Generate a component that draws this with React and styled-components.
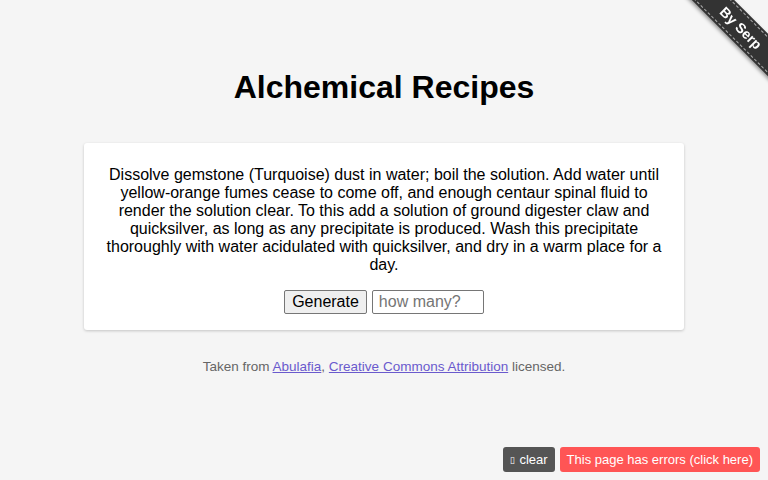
import React from 'react';
import styled, { createGlobalStyle } from 'styled-components';

const GlobalStyle = createGlobalStyle`
  html, body {
    margin: 0;
    padding: 0;
    background: #f5f5f5;
    font-family: "Liberation Sans", Arial, sans-serif;
    overflow: hidden;
  }
`;

const RECIPE =
  'Dissolve gemstone (Turquoise) dust in water; boil the solution. Add water until yellow-orange fumes cease to come off, and enough centaur spinal fluid to render the solution clear. To this add a solution of ground digester claw and quicksilver, as long as any precipitate is produced. Wash this precipitate thoroughly with water acidulated with quicksilver, and dry in a warm place for a day.';

const App = () => {
  return (
    <Page>
      <GlobalStyle />
      <Title>Alchemical Recipes</Title>
      <Card>
        <Recipe>{RECIPE}</Recipe>
        <Controls>
          <GenerateButton>Generate</GenerateButton>
          <CountInput placeholder="how many?" />
        </Controls>
      </Card>
      <Footer>
        Taken from <a href="#">Abulafia</a>,{' '}
        <a href="#">Creative Commons Attribution</a> licensed.
      </Footer>

      <RibbonCorner>
        <Ribbon>
          <RibbonText>By Serp</RibbonText>
        </Ribbon>
      </RibbonCorner>

      <ErrorBar>
        <BarButton $dark>
          <Tofu>{'\u25AF'}</Tofu> clear
        </BarButton>
        <BarButton>This page has errors (click here)</BarButton>
      </ErrorBar>
    </Page>
  );
};

const Page = styled.div`
  width: 768px;
  height: 480px;
  display: flex;
  flex-direction: column;
  align-items: center;
`;

const Title = styled.h1`
  margin: 67px 0 0;
  font-size: 32px;
  line-height: 40px;
  font-weight: bold;
  color: #000;
`;

const Card = styled.section`
  width: 600px;
  box-sizing: border-box;
  margin-top: 36px;
  padding: 23px 20px 16px;
  background: #fff;
  border-radius: 3px;
  box-shadow: 0 1px 3px rgba(0, 0, 0, 0.2);
  text-align: center;
`;

const Recipe = styled.p`
  margin: 0;
  font-size: 16px;
  line-height: 18px;
  color: #000;
`;

const Controls = styled.div`
  display: flex;
  justify-content: center;
  gap: 5px;
  margin-top: 16px;
`;

const GenerateButton = styled.button`
  height: 24px;
  padding: 0 7px;
  font-family: "Liberation Sans", Arial, sans-serif;
  font-size: 16px;
  color: #000;
  background: #efefef;
  border: 1px solid #767676;
  border-radius: 2px;
`;

const CountInput = styled.input`
  width: 112px;
  height: 24px;
  box-sizing: border-box;
  padding: 0 6px;
  font-family: "Liberation Sans", Arial, sans-serif;
  font-size: 16px;
  border: 1px solid #767676;
  border-radius: 2px;
  background: #fff;
  &::placeholder {
    color: #757575;
  }
`;

const Footer = styled.p`
  margin: 29px 0 0;
  font-size: 13.5px;
  color: #666;
  a {
    color: #6a5acd;
  }
`;

const RibbonCorner = styled.div`
  position: fixed;
  top: 0;
  right: 0;
  width: 160px;
  height: 160px;
  overflow: hidden;
  pointer-events: none;
`;

const Ribbon = styled.div`
  position: absolute;
  top: 13px;
  right: -73px;
  width: 200px;
  height: 30px;
  box-sizing: border-box;
  padding: 2px 0;
  transform: rotate(45deg);
  background: #333;
  box-shadow: 0 2px 4px rgba(0, 0, 0, 0.4);
`;

const RibbonText = styled.div`
  height: 26px;
  box-sizing: border-box;
  border-top: 1px dashed rgba(255, 255, 255, 0.6);
  border-bottom: 1px dashed rgba(255, 255, 255, 0.6);
  color: #fff;
  font-size: 14px;
  font-weight: bold;
  line-height: 24px;
  text-align: center;
`;

const ErrorBar = styled.div`
  position: fixed;
  right: 8px;
  bottom: 8px;
  display: flex;
  gap: 5px;
`;

const BarButton = styled.div`
  height: 25px;
  padding: 0 7px;
  display: flex;
  align-items: center;
  gap: 4px;
  font-size: 13px;
  color: #fff;
  border-radius: 3px;
  background: ${p => (p.$dark ? '#555' : '#f55')};
`;

const Tofu = styled.span`
  font-size: 9px;
`;

export default App;
